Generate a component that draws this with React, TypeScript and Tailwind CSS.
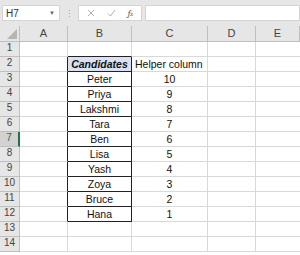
import React from "react";

const names = ["Peter", "Priya", "Lakshmi", "Tara", "Ben", "Lisa", "Yash", "Zoya", "Bruce", "Hana"];
const cols = ["A", "B", "C", "D", "E"];

export default function App() {
  const rows = Array.from({ length: 14 }, (_, i) => i + 1);
  const font = { fontFamily: '"Liberation Sans", Arial, sans-serif' };
  return (
    <div className="w-[300px] h-[255px] overflow-hidden bg-white" style={font}>
      {/* Toolbar */}
      <div className="h-[26px] bg-[#e6e6e6] flex items-start pt-[5px] pl-[2px] gap-0">
        <div className="w-[58px] h-[16px] bg-white border border-[#d4d4d4] flex items-center justify-between pl-[3px] pr-[4px]">
          <span className="text-[10px] text-[#333]">H7</span>
          <span className="text-[6px] text-[#666]">▼</span>
        </div>
        <div className="w-[18px] h-[16px] flex items-center justify-center">
          <div className="flex flex-col gap-[2px]">
            <div className="w-[1px] h-[1px] bg-[#aaa]" />
            <div className="w-[1px] h-[1px] bg-[#aaa]" />
            <div className="w-[1px] h-[1px] bg-[#aaa]" />
          </div>
        </div>
        <div className="w-[64px] h-[16px] bg-white border border-[#d4d4d4] flex items-center justify-around px-[2px]">
          <svg width="8" height="8" viewBox="0 0 8 8"><path d="M1 1 L7 7 M7 1 L1 7" stroke="#b0b0b0" strokeWidth="1" /></svg>
          <svg width="9" height="8" viewBox="0 0 9 8"><path d="M1 4.5 L3.5 7 L8 1" stroke="#b0b0b0" strokeWidth="1" fill="none" /></svg>
          <span className="text-[9px] italic text-[#555] font-serif leading-none">f<span className="text-[6px]">x</span></span>
        </div>
        <div className="flex-1 h-[16px] bg-white border border-[#d4d4d4] ml-[3px]" />
      </div>
      {/* Grid */}
      <div className="grid grid-cols-[20px_48px_64px_76px_48px_1fr] grid-rows-[16px_repeat(14,15px)] text-[10.5px] text-[#111]">
        {/* header row */}
        <div className="bg-[#e6e6e6] border-r border-b border-[#bfbfbf] relative">
          <svg className="absolute right-[2px] bottom-[2px]" width="10" height="10" viewBox="0 0 10 10"><path d="M10 0 L10 10 L0 10 Z" fill="#b5b5b5" /></svg>
        </div>
        {cols.map((c) => (
          <div key={c} className="bg-[#e6e6e6] border-r border-b border-[#bfbfbf] flex items-center justify-center text-[11px] text-[#444]">
            {c}
          </div>
        ))}
        {rows.map((r) => {
          const sel = r === 7;
          const inB = r >= 2 && r <= 12;
          return (
            <React.Fragment key={r}>
              <div
                className={
                  sel
                    ? "bg-[#d2d2d2] border-b border-[#bfbfbf] border-r-2 border-r-[#217346] flex items-end justify-center pb-[1px] text-[10px] text-[#217346]"
                    : "bg-[#e6e6e6] border-r border-b border-[#bfbfbf] flex items-end justify-center pb-[1px] text-[10px] text-[#444]"
                }
              >
                {r}
              </div>
              <div className={inB ? "border-r border-r-[#222] border-b border-b-[#d9d9d9]" : "border-r border-b border-[#d9d9d9]"} />
              <div
                className={
                  (inB
                    ? "border-r border-b border-[#222] "
                    : r === 1
                    ? "border-r border-r-[#d9d9d9] border-b border-b-[#222] "
                    : "border-r border-b border-[#d9d9d9] ") +
                  (r === 2 ? "bg-[#d9e1f2] font-bold italic " : "") +
                  "flex items-end justify-center pb-[2px] leading-none"
                }
              >
                {r === 2 ? "Candidates" : inB && r <= 12 ? names[r - 3] : ""}
              </div>
              <div
                className={
                  "border-r border-b border-[#d9d9d9] flex items-end pb-[2px] leading-none " +
                  (r === 2 ? "justify-start pl-[3px] whitespace-nowrap" : "justify-center")
                }
              >
                {r === 2 ? "Helper column" : r >= 3 && r <= 12 ? String(13 - r) : ""}
              </div>
              <div className="border-r border-b border-[#d9d9d9]" />
              <div className="border-b border-[#d9d9d9]" />
            </React.Fragment>
          );
        })}
      </div>
    </div>
  );
}
